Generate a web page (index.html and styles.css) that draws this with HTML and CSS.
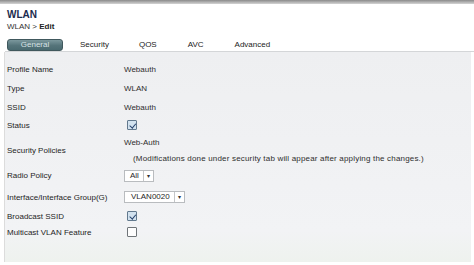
FILE: index.html
```html
<!doctype html>
<html lang="en">
	<head>
		<meta charset="UTF-8" />
		<title>WLAN Edit</title>
		<link rel="stylesheet" href="styles.css">
	</head>
	<body>
		<div class="topbar"></div>
		<div class="header">
			<h1>WLAN</h1>
			<div class="crumb">WLAN &gt; <b>Edit</b></div>
		</div>

		<div class="tabs">
			<span class="tab active">General</span>
			<span class="tab t-sec">Security</span>
			<span class="tab t-qos">QOS</span>
			<span class="tab t-avc">AVC</span>
			<span class="tab t-adv">Advanced</span>
		</div>

		<div class="content">
			<div class="row r-profile">
				<div class="label">Profile Name</div>
				<div class="value">Webauth</div>
			</div>
			<div class="row r-type">
				<div class="label">Type</div>
				<div class="value">WLAN</div>
			</div>
			<div class="row r-ssid">
				<div class="label">SSID</div>
				<div class="value">Webauth</div>
			</div>
			<div class="row r-status">
				<div class="label">Status</div>
				<div class="value"><span class="check on"></span></div>
			</div>
			<div class="row r-security">
				<div class="label">Security Policies</div>
				<div class="value stack">
					<div class="line">Web-Auth</div>
					<div class="line note">(Modifications done under security tab will appear after applying the changes.)</div>
				</div>
			</div>
			<div class="row r-radio">
				<div class="label">Radio Policy</div>
				<div class="value">
					<span class="select s-all"><span class="sel-text">All</span><span class="sel-arrow">&#9662;</span></span>
				</div>
			</div>
			<div class="row r-iface">
				<div class="label">Interface/Interface Group(G)</div>
				<div class="value">
					<span class="select s-vlan"><span class="sel-text">VLAN0020</span><span class="sel-arrow">&#9662;</span></span>
				</div>
			</div>
			<div class="row r-bcast">
				<div class="label">Broadcast SSID</div>
				<div class="value"><span class="check on"></span></div>
			</div>
			<div class="row r-mcast">
				<div class="label">Multicast VLAN Feature</div>
				<div class="value"><span class="check"></span></div>
			</div>
		</div>
	</body>
</html>
```

FILE: styles.css
```css
* {
	margin: 0;
	padding: 0;
	box-sizing: border-box;
}

body {
	font-family: "Liberation Sans", Arial, sans-serif;
	font-size: 8px;
	color: #2a2a2a;
	background: #ffffff;
	width: 474px;
	height: 265px;
	overflow: hidden;
}

.topbar {
	height: 4px;
	background: linear-gradient(#8a8a8a, #d4d4d4);
}

.header {
	padding: 5px 0 0 7px;
	height: 34px;
}

h1 {
	font-size: 10px;
	font-weight: 700;
	color: #1c2b4e;
	line-height: 11px;
}

.crumb {
	margin-top: 1px;
	line-height: 11px;
	color: #333;
}

.crumb b {
	color: #222;
}

.tabs {
	display: flex;
	align-items: center;
	height: 14px;
	margin-left: 5px;
	border-bottom: 1px solid #d4d6d8;
}

.tab {
	line-height: 12px;
	color: #222;
}

.tab.active {
	margin-left: 2px;
	width: 56px;
	height: 12px;
	text-align: center;
	color: #d6e2e4;
	background: linear-gradient(#7b989d, #55747a 55%, #4a6a70);
	border: 1px solid #40585d;
	border-radius: 3px;
	line-height: 10px;
}

.t-sec {
	margin-left: 17px;
}

.t-qos {
	margin-left: 30px;
}

.t-avc {
	margin-left: 31px;
}

.t-adv {
	margin-left: 31px;
}

.content {
	height: 210px;
	margin: 0 3px 0 4px;
	padding-top: 8px;
	background: linear-gradient(#eeeff1, #f2f3f5 85%, #eef2ee);
	border-left: 1px solid #dcdcdc;
}

.row {
	display: flex;
	align-items: center;
}

.label {
	width: 119px;
	padding-left: 2px;
	color: #1e1e1e;
}

.value {
	color: #2e2e2e;
}

.r-profile { height: 19px; }
.r-type { height: 19px; }
.r-ssid { height: 18px; }
.r-status { height: 19px; }
.r-security { height: 31px; }
.r-radio { height: 19px; }
.r-iface { height: 24px; }
.r-bcast { height: 15px; }
.r-mcast { height: 17px; }

.stack {
	display: flex;
	flex-direction: column;
}

.line {
	height: 16px;
	line-height: 16px;
}

.note {
	height: 15px;
	line-height: 15px;
	padding-left: 9px;
	letter-spacing: 0.18px;
}

.check {
	display: inline-block;
	width: 10px;
	height: 10px;
	margin-left: 3px;
	border: 1px solid #6f7478;
	border-radius: 1px;
	background: #fdfdfd;
	position: relative;
}

.check.on {
	background: #d2e2ef;
	border-color: #62798e;
}

.check.on::after {
	content: "";
	position: absolute;
	left: 2.5px;
	top: 1px;
	width: 2.5px;
	height: 4.5px;
	border: solid #24406c;
	border-width: 0 1.5px 1.5px 0;
	transform: rotate(40deg);
}

.select {
	display: inline-flex;
	height: 12px;
	background: #ffffff;
	border: 1px solid #b9bcbf;
	line-height: 10px;
}

.sel-text {
	padding: 0 4px 0 6px;
	color: #1e1e1e;
}

.s-all .sel-text {
	width: 18px;
	padding: 0 0 0 5px;
}

.s-vlan .sel-text {
	width: 49px;
	padding: 0 0 0 6px;
}

.sel-arrow {
	width: 10px;
	border-left: 1px solid #c4c6c8;
	text-align: center;
	font-size: 6px;
	color: #333;
	line-height: 10px;
}
```
